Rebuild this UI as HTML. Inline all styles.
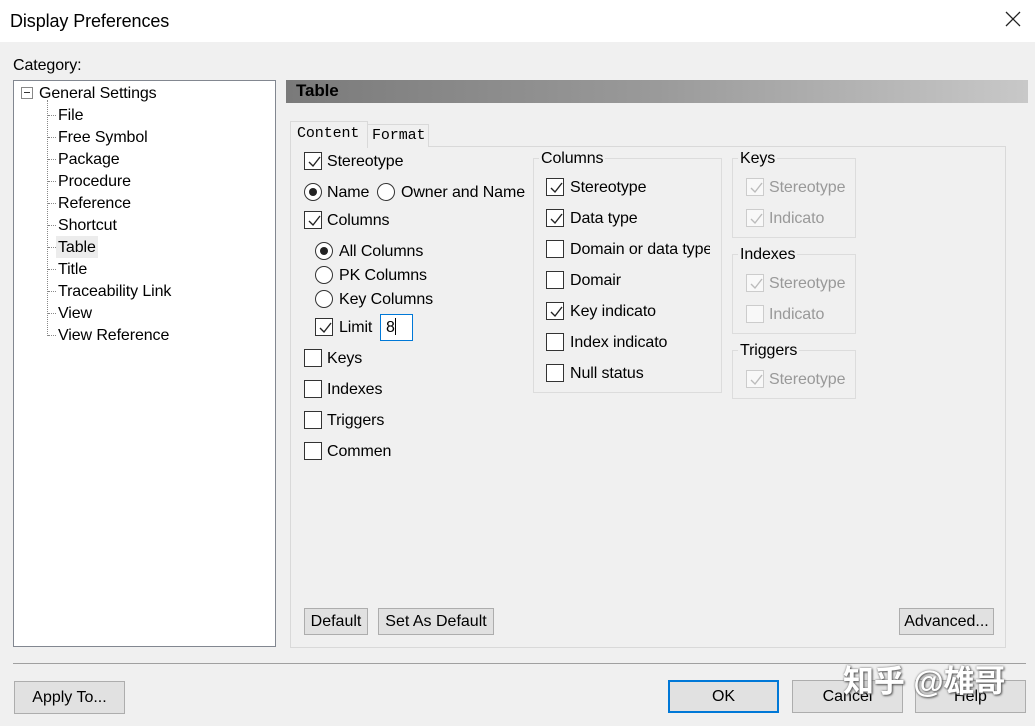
<!DOCTYPE html>
<html><head><meta charset="utf-8"><style>
*{margin:0;padding:0;box-sizing:border-box}
body{width:1035px;height:726px;background:#f0f0f0;font-family:"Liberation Sans",sans-serif;font-size:16px;color:#000;position:relative;overflow:hidden}
.a{position:absolute;white-space:nowrap}
.t{position:absolute;white-space:nowrap;line-height:20px;height:20px;margin-top:1px;letter-spacing:-0.1px}
.cb{position:absolute;width:18px;height:18px;border:1px solid #333;background:#fff}
.cb.d{border-color:#ccc;background:#f8f8f8}
.cb svg{position:absolute;left:1px;top:1px}
.rb{position:absolute;width:18px;height:18px;border:1px solid #333;border-radius:50%;background:#fff}
.rb.on::after{content:"";position:absolute;left:4px;top:4px;width:8px;height:8px;border-radius:50%;background:#222}
.grp{position:absolute;border:1px solid #dcdcdc}
.btn{position:absolute;border:1px solid #adadad;background:#e1e1e1;text-align:center;font-size:16px}
.tree .t{left:58px}
.dot{position:absolute;border-top:1px dotted #888;width:8px;left:48px}
.g{color:#999}
</style></head><body>
<div class="a" style="left:0;top:0;width:1035px;height:42px;background:#fff"></div>
<div class="t" style="left:10px;top:9px;font-size:18px;height:22px;line-height:22px">Display Preferences</div>
<svg class="a" style="left:1005px;top:11px" width="16" height="16"><path d="M1 1L15 15M15 1L1 15" stroke="#222" stroke-width="1.3"/></svg>
<div class="t" style="left:13px;top:55px">Category:</div>
<div class="a tree" style="left:13px;top:80px;width:263px;height:567px;background:#fff;border:1px solid #828790"></div>
<div class="a" style="left:21px;top:87px;width:12px;height:12px;border:1px solid #888;background:#fff"></div>
<div class="a" style="left:24px;top:92px;width:6px;height:1px;background:#333"></div>
<div class="a" style="left:47px;top:100px;height:236px;border-left:1px dotted #888"></div>
<div class="t" style="left:39px;top:83px">General Settings</div>
<div class="tree">
<div class="t" style="top:105px">File</div><div class="dot" style="top:115px"></div>
<div class="t" style="top:127px">Free Symbol</div><div class="dot" style="top:137px"></div>
<div class="t" style="top:149px">Package</div><div class="dot" style="top:159px"></div>
<div class="t" style="top:171px">Procedure</div><div class="dot" style="top:181px"></div>
<div class="t" style="top:193px">Reference</div><div class="dot" style="top:203px"></div>
<div class="t" style="top:215px">Shortcut</div><div class="dot" style="top:225px"></div>
<div class="a" style="left:56px;top:236px;width:42px;height:22px;background:#ececec"></div>
<div class="t" style="top:237px">Table</div><div class="dot" style="top:247px"></div>
<div class="t" style="top:259px">Title</div><div class="dot" style="top:269px"></div>
<div class="t" style="top:281px">Traceability Link</div><div class="dot" style="top:291px"></div>
<div class="t" style="top:303px">View</div><div class="dot" style="top:313px"></div>
<div class="t" style="top:325px">View Reference</div><div class="dot" style="top:335px"></div>
</div>
<div class="a" style="left:286px;top:80px;width:742px;height:23px;background:linear-gradient(90deg,#7a7a7a,#9a9a9a 50%,#c8c8c8)"></div>
<div class="t" style="left:296px;top:80px;font-weight:bold;font-size:17px">Table</div>
<div class="a" style="left:290px;top:146px;width:716px;height:502px;border:1px solid #d9d9d9;background:#f0f0f0"></div>
<div class="a" style="left:367px;top:124px;width:62px;height:23px;border:1px solid #d9d9d9;border-bottom:none;background:#f0f0f0"></div>
<div class="a" style="left:290px;top:121px;width:78px;height:27px;border:1px solid #d9d9d9;border-bottom:none;background:#f0f0f0"></div>
<div class="t" style="left:297px;top:123px;font-family:'Liberation Mono',monospace;font-size:15px">Content</div>
<div class="t" style="left:372px;top:125px;font-family:'Liberation Mono',monospace;font-size:15px">Format</div>

<div class="cb" style="left:304px;top:152px"><svg width="16" height="16"><path d="M3 8l4 4 7-9" fill="none" stroke="#222" stroke-width="1.4"/></svg></div><div class="t" style="left:327px;top:151px">Stereotype</div>
<div class="rb on" style="left:304px;top:183px"></div><div class="t" style="left:327px;top:182px">Name</div>
<div class="rb" style="left:377px;top:183px"></div><div class="t" style="left:401px;top:182px">Owner and Name</div>
<div class="cb" style="left:304px;top:211px"><svg width="16" height="16"><path d="M3 8l4 4 7-9" fill="none" stroke="#222" stroke-width="1.4"/></svg></div><div class="t" style="left:327px;top:210px">Columns</div>
<div class="rb on" style="left:315px;top:242px"></div><div class="t" style="left:339px;top:241px">All Columns</div>
<div class="rb" style="left:315px;top:266px"></div><div class="t" style="left:339px;top:265px">PK Columns</div>
<div class="rb" style="left:315px;top:290px"></div><div class="t" style="left:339px;top:289px">Key Columns</div>
<div class="cb" style="left:315px;top:318px"><svg width="16" height="16"><path d="M3 8l4 4 7-9" fill="none" stroke="#222" stroke-width="1.4"/></svg></div><div class="t" style="left:339px;top:317px">Limit</div>
<div class="a" style="left:380px;top:314px;width:33px;height:27px;border:1px solid #0078d7;background:#fff"></div>
<div class="t" style="left:386px;top:317px">8<span style="display:inline-block;width:1px;height:17px;background:#000;vertical-align:-3px"></span></div>
<div class="cb" style="left:304px;top:349px"></div><div class="t" style="left:327px;top:348px">Keys</div>
<div class="cb" style="left:304px;top:380px"></div><div class="t" style="left:327px;top:379px">Indexes</div>
<div class="cb" style="left:304px;top:411px"></div><div class="t" style="left:327px;top:410px">Triggers</div>
<div class="cb" style="left:304px;top:442px"></div><div class="t" style="left:327px;top:441px">Commen</div>

<div class="grp" style="left:533px;top:158px;width:189px;height:235px"></div>
<div class="t" style="left:539px;top:148px;background:#f0f0f0;padding:0 2px">Columns</div>
<div class="cb" style="left:546px;top:178px"><svg width="16" height="16"><path d="M3 8l4 4 7-9" fill="none" stroke="#222" stroke-width="1.4"/></svg></div><div class="t" style="left:570px;top:177px">Stereotype</div>
<div class="cb" style="left:546px;top:209px"><svg width="16" height="16"><path d="M3 8l4 4 7-9" fill="none" stroke="#222" stroke-width="1.4"/></svg></div><div class="t" style="left:570px;top:208px">Data type</div>
<div class="cb" style="left:546px;top:240px"></div><div class="t" style="left:570px;top:239px;width:140px;overflow:hidden">Domain or data type</div>
<div class="cb" style="left:546px;top:271px"></div><div class="t" style="left:570px;top:270px">Domair</div>
<div class="cb" style="left:546px;top:302px"><svg width="16" height="16"><path d="M3 8l4 4 7-9" fill="none" stroke="#222" stroke-width="1.4"/></svg></div><div class="t" style="left:570px;top:301px">Key indicato</div>
<div class="cb" style="left:546px;top:333px"></div><div class="t" style="left:570px;top:332px">Index indicato</div>
<div class="cb" style="left:546px;top:364px"></div><div class="t" style="left:570px;top:363px">Null status</div>

<div class="grp" style="left:732px;top:158px;width:124px;height:80px"></div>
<div class="t" style="left:738px;top:148px;background:#f0f0f0;padding:0 2px">Keys</div>
<div class="cb d" style="left:746px;top:178px"><svg width="16" height="16"><path d="M3 8l4 4 7-9" fill="none" stroke="#bbb" stroke-width="1.4"/></svg></div><div class="t g" style="left:769px;top:177px">Stereotype</div>
<div class="cb d" style="left:746px;top:209px"><svg width="16" height="16"><path d="M3 8l4 4 7-9" fill="none" stroke="#bbb" stroke-width="1.4"/></svg></div><div class="t g" style="left:769px;top:208px">Indicato</div>
<div class="grp" style="left:732px;top:254px;width:124px;height:80px"></div>
<div class="t" style="left:738px;top:244px;background:#f0f0f0;padding:0 2px">Indexes</div>
<div class="cb d" style="left:746px;top:274px"><svg width="16" height="16"><path d="M3 8l4 4 7-9" fill="none" stroke="#bbb" stroke-width="1.4"/></svg></div><div class="t g" style="left:769px;top:273px">Stereotype</div>
<div class="cb d" style="left:746px;top:305px"></div><div class="t g" style="left:769px;top:304px">Indicato</div>
<div class="grp" style="left:732px;top:350px;width:124px;height:49px"></div>
<div class="t" style="left:738px;top:340px;background:#f0f0f0;padding:0 2px">Triggers</div>
<div class="cb d" style="left:746px;top:370px"><svg width="16" height="16"><path d="M3 8l4 4 7-9" fill="none" stroke="#bbb" stroke-width="1.4"/></svg></div><div class="t g" style="left:769px;top:369px">Stereotype</div>

<div class="btn" style="left:304px;top:608px;width:64px;height:27px;line-height:25px">Default</div>
<div class="btn" style="left:378px;top:608px;width:116px;height:27px;line-height:25px">Set As Default</div>
<div class="btn" style="left:899px;top:608px;width:95px;height:27px;line-height:25px">Advanced...</div>

<div class="a" style="left:13px;top:663px;width:1013px;height:1px;background:#a0a0a0"></div>
<div class="btn" style="left:14px;top:681px;width:111px;height:33px;line-height:31px">Apply To...</div>
<div class="btn" style="left:668px;top:680px;width:111px;height:33px;line-height:29px;border:2px solid #0078d7">OK</div>
<div class="btn" style="left:792px;top:680px;width:111px;height:33px;line-height:31px">Cancel</div>
<div class="btn" style="left:915px;top:680px;width:111px;height:33px;line-height:31px">Help</div>
<div class="t" style="left:843px;top:662px;height:38px;line-height:38px;font-size:31px;font-weight:bold;color:#fff;font-family:'Liberation Sans','Noto Sans CJK SC',sans-serif;text-shadow:1px 1px 2px #555,0 0 2px #777">知乎 @雄哥</div>
</body></html>
